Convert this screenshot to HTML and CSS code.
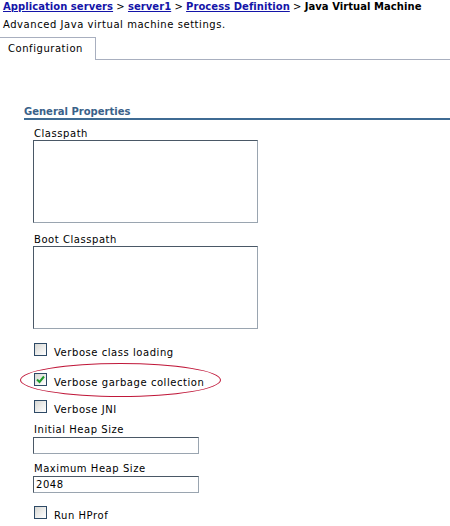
FILE: index.html
```html
<!DOCTYPE html>
<html>
<head>
<meta charset="utf-8">
<link rel="stylesheet" href="styles.css">
</head>
<body>
<div class="crumbs"><a href="#">Application servers</a> &gt; <a href="#">server1</a> &gt; <a href="#">Process Definition</a> &gt; <b>Java Virtual Machine</b></div>
<div class="desc">Advanced Java virtual machine settings.</div>
<div class="tabs"><div class="tab">Configuration</div><div class="tab-fill"></div></div>
<div class="props">
  <div class="section">General Properties</div>
  <div class="fields">
    <div class="label first">Classpath</div>
    <textarea class="area"></textarea>
    <div class="label gap-area">Boot Classpath</div>
    <textarea class="area"></textarea>
    <div class="check row1"><span class="box"></span><span class="ctext">Verbose class loading</span></div>
    <div class="check row2"><span class="box checked"><svg viewBox="0 0 11 11" width="11" height="11"><path d="M2 5.5 L4.5 8 L9 2.5" fill="none" stroke="#1f9a2a" stroke-width="2"/></svg></span><span class="ctext">Verbose garbage collection</span><span class="ring"></span></div>
    <div class="check row3"><span class="box"></span><span class="ctext">Verbose JNI</span></div>
    <div class="label gap-check">Initial Heap Size</div>
    <div class="input"></div>
    <div class="label gap-input">Maximum Heap Size</div>
    <div class="input">2048</div>
    <div class="check row4"><span class="box"></span><span class="ctext">Run HProf</span></div>
  </div>
</div>
</body>
</html>
```
FILE: styles.css
```css
html, body {
  margin: 0;
  padding: 0;
  background: #ffffff;
}
body {
  font-family: "DejaVu Sans", Verdana, sans-serif;
  font-size: 10px;
  color: #000000;
  line-height: 12px;
  letter-spacing: 0.55px;
  overflow: hidden;
}
.crumbs {
  padding: 1px 0 0 3px;
  line-height: 12px;
  font-weight: normal;
  letter-spacing: 0.05px;
}
.crumbs a {
  color: #1414a8;
  text-decoration: underline;
  font-weight: bold;
}
.crumbs b {
  color: #000000;
  font-weight: bold;
}
.desc {
  padding-left: 3px;
  margin-top: 6px;
}
.tabs {
  display: flex;
  margin-top: 6px;
}
.tab {
  width: 87px;
  height: 17px;
  padding: 5px 0 0 8px;
  border-top: 1px solid #a8afbf;
  border-right: 1px solid #a8afbf;
}
.tab-fill {
  flex: 1;
  border-bottom: 1px solid #a8afbf;
}
.props {
  padding-left: 24px;
}
.section {
  margin-top: 46px;
  font-weight: bold;
  letter-spacing: 0;
  color: #3a6189;
  border-bottom: 2px solid #3f6b93;
}
.fields {
  padding-left: 9px;
  display: flex;
  flex-direction: column;
  align-items: flex-start;
}
.label {
  padding-left: 1px;
}
.label.first {
  margin-top: 8px;
}
.label.gap-area {
  margin-top: 11px;
}
.label.gap-check {
  margin-top: 8px;
}
.label.gap-input {
  margin-top: 9px;
}
.area {
  display: block;
  box-sizing: border-box;
  width: 225px;
  height: 83px;
  margin: 0;
  padding: 0;
  resize: none;
  border: 1px solid;
  border-color: #4a5866 #9aa5b0 #9aa5b0 #4a5866;
  background: #ffffff;
}
.input {
  box-sizing: border-box;
  width: 166px;
  height: 17px;
  margin-top: 1px;
  padding: 2px 0 0 2px;
  border: 1px solid;
  border-color: #4a5866 #9aa5b0 #9aa5b0 #4a5866;
  line-height: 12px;
}
.check {
  position: relative;
  display: flex;
  align-items: flex-start;
}
.row1 { margin-top: 14px; }
.row2 { margin-top: 14px; }
.row3 { margin-top: 11px; }
.row4 { margin-top: 13px; }
.box {
  box-sizing: border-box;
  width: 13px;
  height: 13px;
  margin-left: 1px;
  border: 1px solid #2e4a66;
  background: linear-gradient(135deg, #d6d6d2 0%, #ececea 50%, #ffffff 100%);
  display: flex;
  align-items: center;
  justify-content: center;
}
.ctext {
  margin-left: 7px;
  margin-top: 4px;
}
.ring {
  position: absolute;
  left: -13px;
  top: -10px;
  width: 199px;
  height: 32px;
  border: 1px solid #c0183a;
  border-radius: 50%;
}
```
